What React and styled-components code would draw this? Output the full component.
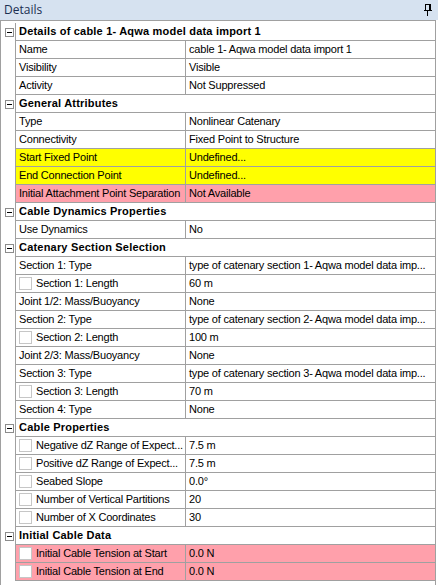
import React from "react";
import styled, { createGlobalStyle } from "styled-components";

const Global = createGlobalStyle`
  html, body { margin: 0; padding: 0; background: #ffffff; }
  body { font-family: "Liberation Sans", Arial, sans-serif; font-size: 11px; color: #000; }
`;

const Panel = styled.div`
  width: 438px;
  height: 585px;
  display: flex;
  flex-direction: column;
  overflow: hidden;
  background: #ffffff;
`;

const TitleBar = styled.div`
  height: 20px;
  flex: none;
  display: flex;
  align-items: center;
  justify-content: space-between;
  padding: 0 6px 0 4px;
  background: #d6e2f0;
  font-family: "Open Sans", "Noto Sans", sans-serif;
  font-size: 12px;
  color: #1b2f52;
`;

const Title = styled.span`
  line-height: 20px;
`;

const Grid = styled.div`
  width: 434px;
  flex: 1;
  border: 1px solid #a0a0a0;
  border-bottom: none;
  padding-top: 2px;
  display: flex;
  flex-direction: column;
  background: #ffffff;
`;

const Row = styled.div`
  display: grid;
  grid-template-columns: ${p => (p.$category ? "15px 1fr" : "15px 170px 1fr")};
  height: 18px;
  flex: none;
`;

const Margin = styled.div`
  border-right: 1px solid #a0a0a0;
  display: flex;
  align-items: center;
  padding-left: 4px;
`;

const Expander = styled.div`
  width: 7px;
  height: 7px;
  border: 1px solid #8c8c8c;
  background: #ffffff;
  display: flex;
  align-items: center;
  justify-content: center;
  &::after {
    content: "";
    width: 5px;
    height: 1px;
    background: #000;
  }
`;

const Cell = styled.div`
  border-bottom: 1px solid #a0a0a0;
  border-right: ${p => (p.$divider ? "1px solid #a0a0a0" : "none")};
  background: ${p => p.$bg || "transparent"};
  display: flex;
  align-items: center;
  padding-left: 3px;
  white-space: nowrap;
  overflow: hidden;
  font-weight: ${p => (p.$bold ? "bold" : "normal")};
  letter-spacing: ${p => (p.$bold ? "0.2px" : "-0.2px")};
  line-height: 17px;
`;

const Check = styled.span`
  width: 11px;
  height: 11px;
  border: 1px solid #c6c6c6;
  background: #ffffff;
  margin-right: 4px;
  flex: none;
`;

const PinIcon = () => (
  <svg width="8" height="12" viewBox="0 0 8 12" shapeRendering="crispEdges">
    <path d="M1 0h6v1H1z M1 1h1v5H1z M5 1h2v5H5z M0 6h8v1H0z M3 7h1v5H3z" fill="#000" />
  </svg>
);

const YELLOW = "#ffff00";
const PINK = "#ffa0ab";

const rows = [
  { cat: "Details of cable 1- Aqwa model data import 1" },
  { label: "Name", value: "cable 1- Aqwa model data import 1" },
  { label: "Visibility", value: "Visible" },
  { label: "Activity", value: "Not Suppressed" },
  { cat: "General Attributes" },
  { label: "Type", value: "Nonlinear Catenary" },
  { label: "Connectivity", value: "Fixed Point to Structure" },
  { label: "Start Fixed Point", value: "Undefined...", bg: YELLOW },
  { label: "End Connection Point", value: "Undefined...", bg: YELLOW },
  { label: "Initial Attachment Point Separation", value: "Not Available", bg: PINK },
  { cat: "Cable Dynamics Properties" },
  { label: "Use Dynamics", value: "No" },
  { cat: "Catenary Section Selection" },
  { label: "Section 1: Type", value: "type of catenary section 1- Aqwa model data imp..." },
  { label: "Section 1: Length", value: "60 m", check: true },
  { label: "Joint 1/2: Mass/Buoyancy", value: "None" },
  { label: "Section 2: Type", value: "type of catenary section 2- Aqwa model data imp..." },
  { label: "Section 2: Length", value: "100 m", check: true },
  { label: "Joint 2/3: Mass/Buoyancy", value: "None" },
  { label: "Section 3: Type", value: "type of catenary section 3- Aqwa model data imp..." },
  { label: "Section 3: Length", value: "70 m", check: true },
  { label: "Section 4: Type", value: "None" },
  { cat: "Cable Properties" },
  { label: "Negative dZ Range of Expect...", value: "7.5 m", check: true },
  { label: "Positive dZ Range of Expect...", value: "7.5 m", check: true },
  { label: "Seabed Slope", value: "0.0°", check: true },
  { label: "Number of Vertical Partitions", value: "20", check: true },
  { label: "Number of X Coordinates", value: "30", check: true },
  { cat: "Initial Cable Data" },
  { label: "Initial Cable Tension at Start", value: "0.0 N", check: true, bg: PINK },
  { label: "Initial Cable Tension at End", value: "0.0 N", check: true, bg: PINK },
];

export default function App() {
  return (
    <>
      <Global />
      <Panel>
        <TitleBar>
          <Title>Details</Title>
          <PinIcon />
        </TitleBar>
        <Grid>
          {rows.map((r, i) =>
            r.cat ? (
              <Row key={i} $category>
                <Margin>
                  <Expander />
                </Margin>
                <Cell $bold>{r.cat}</Cell>
              </Row>
            ) : (
              <Row key={i}>
                <Margin />
                <Cell $divider $bg={r.bg}>
                  {r.check && <Check />}
                  {r.label}
                </Cell>
                <Cell $bg={r.bg}>{r.value}</Cell>
              </Row>
            )
          )}
        </Grid>
      </Panel>
    </>
  );
}
